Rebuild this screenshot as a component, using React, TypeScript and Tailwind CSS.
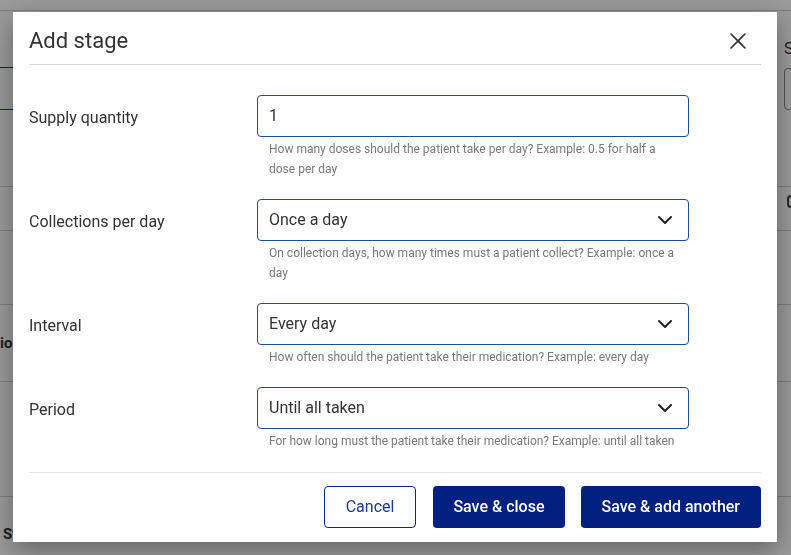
import { ChevronDown, X } from "lucide-react";

const fields = [
  {
    label: "Supply quantity",
    value: "1",
    select: false,
    help: "How many doses should the patient take per day? Example: 0.5 for half a dose per day",
  },
  {
    label: "Collections per day",
    value: "Once a day",
    select: true,
    help: "On collection days, how many times must a patient collect? Example: once a day",
  },
  {
    label: "Interval",
    value: "Every day",
    select: true,
    help: "How often should the patient take their medication? Example: every day",
  },
  {
    label: "Period",
    value: "Until all taken",
    select: true,
    help: "For how long must the patient take their medication? Example: until all taken",
  },
];

function BackgroundPage() {
  return (
    <div className="h-[555px] w-[791px] overflow-hidden bg-white text-[#333]">
      <div className="h-[11px] border-b border-[#d0d0d0] bg-white" />
      <div className="flex h-[176px] border-b border-[#cfcfcf]">
        <div className="w-[200px] shrink-0 pt-[56px]">
          <div className="h-[43px] border-y border-[#1f3d7a]" />
        </div>
        <div className="ml-[584px] w-[200px] shrink-0 pt-[26px]">
          <div className="whitespace-nowrap text-[16px] leading-6">S</div>
          <div className="mt-[7px] h-[42px] w-[180px] rounded border border-[#8a8a8a]" />
        </div>
      </div>
      <div className="flex h-[44px] border-b border-[#cfcfcf]">
        <div className="ml-[787px] mt-[8px] h-[13px] w-[13px] shrink-0 rounded-sm border-2 border-[#444]" />
      </div>
      <div className="h-[74px] border-b border-[#cfcfcf]" />
      <div className="flex h-[77px] items-center border-b border-[#cfcfcf]">
        <span className="whitespace-nowrap text-[15px] font-bold">io</span>
      </div>
      <div className="h-[115px] border-b border-[#cfcfcf]" />
      <div className="flex items-end pl-[3px] pt-[26px]">
        <span className="text-[15px] font-bold">Stages</span>
        <span className="ml-[290px] text-[15px]">Supply quantity</span>
        <span className="ml-[160px] text-[15px]">Every day, until taking</span>
      </div>
    </div>
  );
}

function Field({ f }: { f: (typeof fields)[number] }) {
  return (
    <div className="flex">
      <div className="flex h-[42px] w-[228px] shrink-0 items-center pt-[3px] text-[16px] text-[#333]">
        {f.label}
      </div>
      <div className="w-[432px]">
        <div className="flex h-[42px] items-center justify-between rounded border border-[#1c4f91] pl-[11px] pr-[11px] text-[16px] text-[#333]">
          <span>{f.value}</span>
          {f.select && <ChevronDown size={24} strokeWidth={2} className="text-[#222]" />}
        </div>
        <p className="mt-[2px] px-3 text-[12px] leading-5 text-[#7a7a7a]">{f.help}</p>
      </div>
    </div>
  );
}

export default function App() {
  return (
    <div className="relative font-['Roboto',sans-serif]">
      <BackgroundPage />
      <div className="fixed inset-0 bg-black/40">
        <div className="ml-[13px] mt-[12px] w-[764px] bg-white px-4 shadow-[0_8px_24px_rgba(0,0,0,0.35)]">
          <div className="flex items-center justify-between border-b border-[#d6d6d6] pb-[9px] pt-[15px]">
            <h2 className="text-[22px] leading-7 text-[#333]">Add stage</h2>
            <X size={28} strokeWidth={1.4} className="mr-[9px] text-[#333]" />
          </div>
          <div className="flex flex-col gap-5 pb-[21px] pt-[30px]">
            {fields.map((f) => (
              <Field key={f.label} f={f} />
            ))}
          </div>
          <div className="flex justify-end border-t border-[#e6e6ee] pb-[14px] pt-[13px]">
            <button className="h-[42px] rounded border border-[#0b2a7f] bg-white px-[21px] text-[16px] text-[#1b3a8b]">
              Cancel
            </button>
            <button className="ml-[17px] h-[42px] rounded bg-[#02207f] px-5 text-[16px] font-medium text-white">
              Save &amp; close
            </button>
            <button className="ml-4 h-[42px] rounded bg-[#02207f] px-[21px] text-[16px] font-medium text-white">
              Save &amp; add another
            </button>
          </div>
        </div>
      </div>
    </div>
  );
}
